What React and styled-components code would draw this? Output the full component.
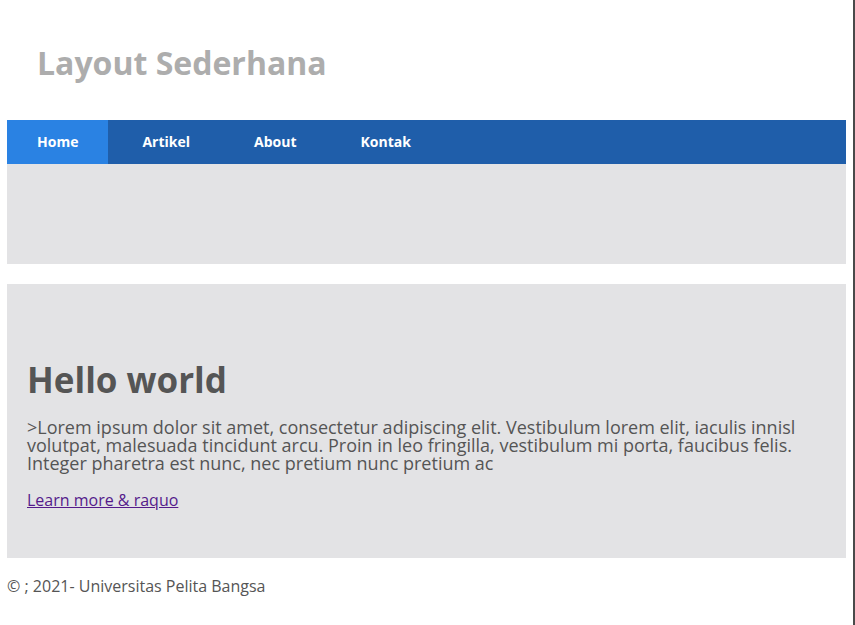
import React from "react";
import styled, { createGlobalStyle } from "styled-components";

const GlobalStyle = createGlobalStyle`
  * { box-sizing: border-box; }
  html, body { margin: 0; padding: 0; background: #ffffff; }
  body { font-family: "Open Sans", "Liberation Sans", sans-serif; color: #555555; }
`;

const Shell = styled.div`
  min-height: 100vh;
  padding: 0 7px;
  border-right: 2px solid #4a4a4a;
`;

const Header = styled.header`
  padding: 41px 0 36px 30px;
`;

const Title = styled.h1`
  margin: 0;
  font-size: 32px;
  font-weight: 700;
  line-height: normal;
  color: #adadad;
`;

const Nav = styled.nav`
  display: flex;
  gap: 4px;
  height: 44px;
  background: #1f5eaa;
`;

const NavItem = styled.a`
  display: block;
  padding: 0 30px;
  line-height: 44px;
  font-size: 14px;
  font-weight: 700;
  color: #ffffff;
  text-decoration: none;
  background: ${(p) => (p.$active ? "#2a82e3" : "transparent")};
`;

const Banner = styled.section`
  height: 100px;
  background: #e3e3e5;
  margin-bottom: 20px;
`;

const Content = styled.section`
  background: #e3e3e5;
  padding: 75px 20px 46px;
`;

const Heading = styled.h2`
  margin: 0;
  font-size: 35px;
  font-weight: 700;
  line-height: 42px;
  color: #555555;
`;

const Text = styled.p`
  margin: 17px 0 0;
  font-size: 18px;
  line-height: 18px;
  color: #555555;
`;

const MoreLink = styled.a`
  display: inline-block;
  margin-top: 16px;
  font-size: 16px;
  line-height: 24px;
  color: #551a8b;
  text-decoration: underline;
`;

const Footer = styled.footer`
  margin-top: 16px;
  font-size: 16px;
  line-height: 24px;
  color: #555555;
`;

export default function App() {
  const items = ["Home", "Artikel", "About", "Kontak"];
  return (
    <>
      <GlobalStyle />
      <Shell>
        <Header>
          <Title>Layout Sederhana</Title>
        </Header>
        <Nav>
          {items.map((it, i) => (
            <NavItem key={it} href="#" $active={i === 0}>
              {it}
            </NavItem>
          ))}
        </Nav>
        <Banner />
        <Content>
          <Heading>Hello world</Heading>
          <Text>
            &gt;Lorem ipsum dolor sit amet, consectetur adipiscing elit. Vestibulum lorem elit, iaculis innisl
            volutpat, malesuada tincidunt arcu. Proin in leo fringilla, vestibulum mi porta, faucibus felis.
            Integer pharetra est nunc, nec pretium nunc pretium ac
          </Text>
          <div>
            <MoreLink href="#">Learn more &amp; raquo</MoreLink>
          </div>
        </Content>
        <Footer>© ; 2021- Universitas Pelita Bangsa</Footer>
      </Shell>
    </>
  );
}
